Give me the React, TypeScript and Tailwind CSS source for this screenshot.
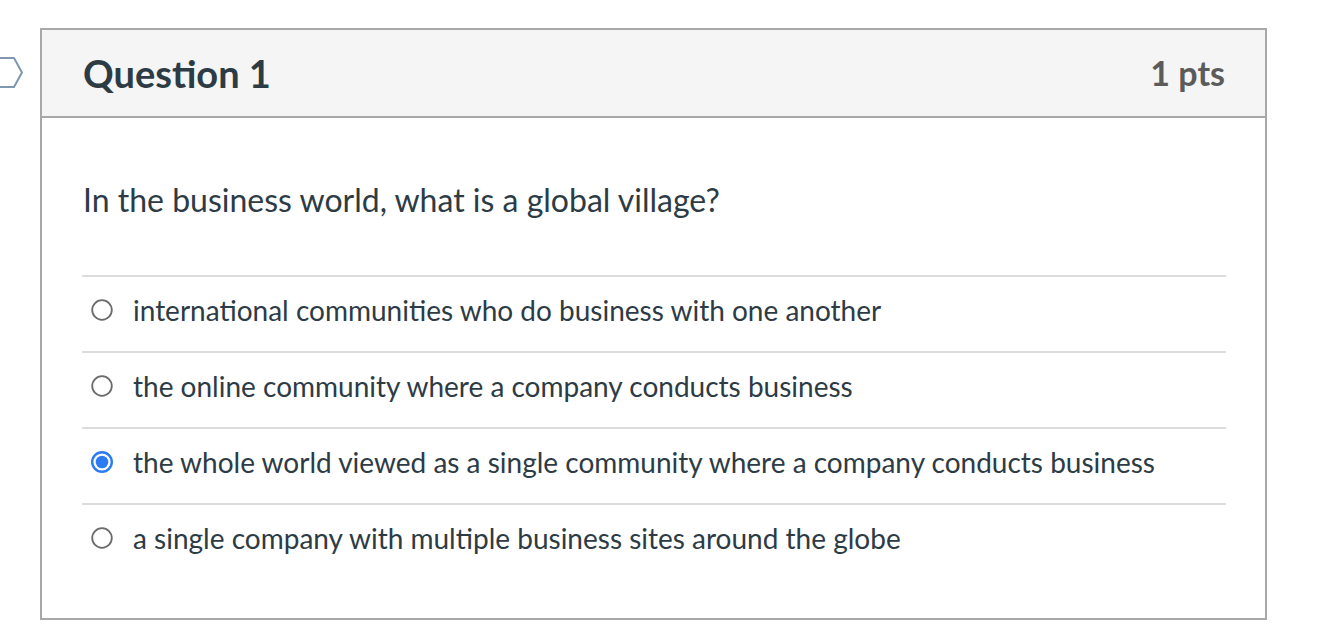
import React from 'react';

const answers = [
  { text: 'international communities who do business with one another', checked: false },
  { text: 'the online community where a company conducts business', checked: false },
  { text: 'the whole world viewed as a single community where a company conducts business', checked: true },
  { text: 'a single company with multiple business sites around the globe', checked: false },
];

const Radio = ({ checked }: { checked: boolean }) =>
  checked ? (
    <svg width="22" height="22" viewBox="0 0 22 22" className="shrink-0">
      <circle cx="11" cy="11" r="9.8" fill="white" stroke="#2b7bf3" strokeWidth="2.4" />
      <circle cx="11" cy="11" r="6.3" fill="#2b7bf3" />
    </svg>
  ) : (
    <svg width="22" height="22" viewBox="0 0 22 22" className="shrink-0">
      <circle cx="11" cy="11" r="9.8" fill="white" stroke="#6b6b6b" strokeWidth="1.8" />
    </svg>
  );

export default function App() {
  return (
    <div
      className="w-[1328px] h-[636px] bg-white flex pt-[28px] overflow-hidden"
      style={{ fontFamily: 'Lato, "Open Sans", sans-serif' }}
    >
      {/* flag marker, cut at the page edge */}
      <div className="w-[40px] shrink-0 pt-[28px]">
        <svg width="24" height="34" viewBox="0 0 24 34">
          <path d="M-10 2 H14 L22 16.5 L14 31 H-10" fill="none" stroke="#7f97b0" strokeWidth="2" strokeLinejoin="round" />
        </svg>
      </div>

      <div className="w-[1227px] h-[592px] border-2 border-[#a8a8a8] flex flex-col">
        <div className="h-[88px] bg-[#f5f5f5] border-b-2 border-[#a8a8a8] flex items-center justify-between pl-[41px] pr-[40px]">
          <h2 className="text-[38px] font-bold text-[#2d3b45] leading-none">Question 1</h2>
          <div className="text-[34px] font-bold text-[#5b5b5b] leading-none">1 pts</div>
        </div>

        <div className="px-[40px] pr-[39px] pt-[62px] text-[#2d3b45]">
          <p className="text-[32px] leading-[40px] pl-[1px] mb-[55px]">In the business world, what is a global village?</p>

          <div>
            {answers.map((a, i) => (
              <div
                key={i}
                className="h-[76px] border-t-2 border-[#dcdcdc] flex items-center gap-[20px] pl-[9px] pb-[8px]"
              >
                <Radio checked={a.checked} />
                <span className="text-[28px] leading-none">{a.text}</span>
              </div>
            ))}
          </div>
        </div>
      </div>
    </div>
  );
}
